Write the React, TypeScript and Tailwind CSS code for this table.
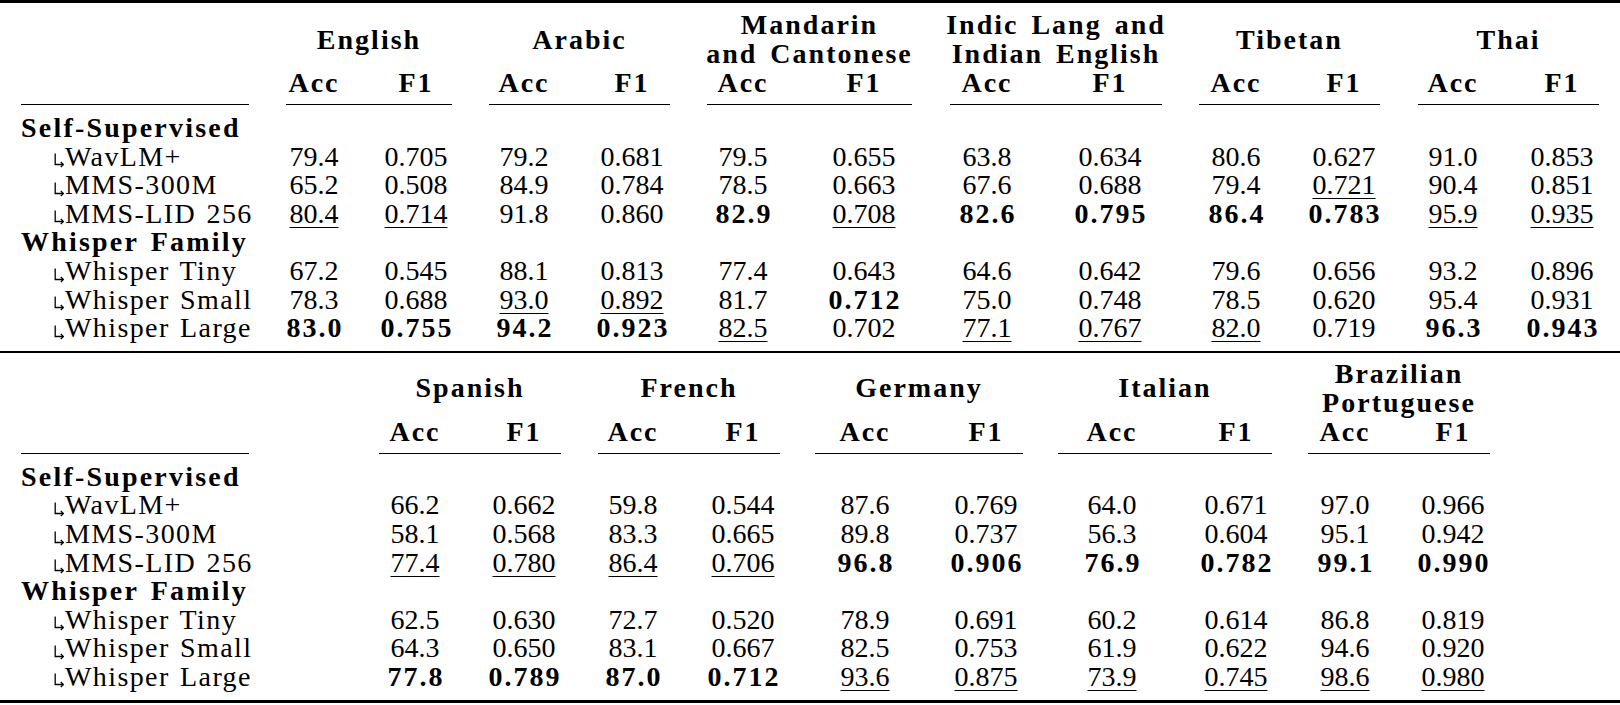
import React from 'react';

type Group = { name: string[]; trim: string };
type Row = { label: string; sub: boolean; vals: string[] };

// column templates: label column, then Acc / F1 pairs
const TOP_COLS = 'grid grid-cols-[263px_102px_102px_114px_102px_120px_122px_124px_122px_130px_86px_132px_86px]';
const BOTTOM_COLS = 'grid grid-cols-[365px_100px_118px_100px_120px_124px_118px_134px_114px_104px_112px]';

const topGroups: Group[] = [
  { name: ['English'], trim: 'ml-[23px] mr-[15px]' },
  { name: ['Arabic'], trim: 'ml-[22px] mr-[13px]' },
  { name: ['Mandarin', 'and Cantonese'], trim: 'ml-[24px] mr-[13px]' },
  { name: ['Indic Lang and', 'Indian English'], trim: 'ml-[25px] mr-[9px]' },
  { name: ['Tibetan'], trim: 'ml-[28px] mr-[7px]' },
  { name: ['Thai'], trim: 'ml-[31px] mr-[6px]' },
];

const bottomGroups: Group[] = [
  { name: ['Spanish'], trim: 'ml-[14px] mr-[22px]' },
  { name: ['French'], trim: 'ml-[15px] mr-[23px]' },
  { name: ['Germany'], trim: 'ml-[12px] mr-[22px]' },
  { name: ['Italian'], trim: 'ml-[13px] mr-[21px]' },
  { name: ['Brazilian', 'Portuguese'], trim: 'ml-[15px] mr-[19px]' },
];

// "*" = best (bold), "_" = second best (underlined)
const topRows: Row[] = [
  { label: 'Self-Supervised', sub: false, vals: [] },
  { label: 'WavLM+', sub: true, vals: ['79.4', '0.705', '79.2', '0.681', '79.5', '0.655', '63.8', '0.634', '80.6', '0.627', '91.0', '0.853'] },
  { label: 'MMS-300M', sub: true, vals: ['65.2', '0.508', '84.9', '0.784', '78.5', '0.663', '67.6', '0.688', '79.4', '_0.721', '90.4', '0.851'] },
  { label: 'MMS-LID 256', sub: true, vals: ['_80.4', '_0.714', '91.8', '0.860', '*82.9', '_0.708', '*82.6', '*0.795', '*86.4', '*0.783', '_95.9', '_0.935'] },
  { label: 'Whisper Family', sub: false, vals: [] },
  { label: 'Whisper Tiny', sub: true, vals: ['67.2', '0.545', '88.1', '0.813', '77.4', '0.643', '64.6', '0.642', '79.6', '0.656', '93.2', '0.896'] },
  { label: 'Whisper Small', sub: true, vals: ['78.3', '0.688', '_93.0', '_0.892', '81.7', '*0.712', '75.0', '0.748', '78.5', '0.620', '95.4', '0.931'] },
  { label: 'Whisper Large', sub: true, vals: ['*83.0', '*0.755', '*94.2', '*0.923', '_82.5', '0.702', '_77.1', '_0.767', '_82.0', '0.719', '*96.3', '*0.943'] },
];

const bottomRows: Row[] = [
  { label: 'Self-Supervised', sub: false, vals: [] },
  { label: 'WavLM+', sub: true, vals: ['66.2', '0.662', '59.8', '0.544', '87.6', '0.769', '64.0', '0.671', '97.0', '0.966'] },
  { label: 'MMS-300M', sub: true, vals: ['58.1', '0.568', '83.3', '0.665', '89.8', '0.737', '56.3', '0.604', '95.1', '0.942'] },
  { label: 'MMS-LID 256', sub: true, vals: ['_77.4', '_0.780', '_86.4', '_0.706', '*96.8', '*0.906', '*76.9', '*0.782', '*99.1', '*0.990'] },
  { label: 'Whisper Family', sub: false, vals: [] },
  { label: 'Whisper Tiny', sub: true, vals: ['62.5', '0.630', '72.7', '0.520', '78.9', '0.691', '60.2', '0.614', '86.8', '0.819'] },
  { label: 'Whisper Small', sub: true, vals: ['64.3', '0.650', '83.1', '0.667', '82.5', '0.753', '61.9', '0.622', '94.6', '0.920'] },
  { label: 'Whisper Large', sub: true, vals: ['*77.8', '*0.789', '*87.0', '*0.712', '_93.6', '_0.875', '_73.9', '_0.745', '_98.6', '_0.980'] },
];

const Value = ({ v }: { v: string }) => {
  const bold = v.startsWith('*');
  const under = v.startsWith('_');
  const text = v.replace(/^[*_]/, '');
  return (
    <div className="flex justify-center">
      <span
        className={
          bold
            ? 'font-bold tracking-[2px] -mr-[2px]'
            : under
              ? 'underline decoration-1 underline-offset-[4px]'
              : ''
        }
      >
        {text}
      </span>
    </div>
  );
};

// small hooked arrow in front of each model name
const SubArrow = () => (
  <svg width="10" height="16" viewBox="0 0 10 16" className="inline-block mr-[1px] -mb-[2px]" fill="none" stroke="black" strokeWidth="1.3">
    <path d="M1.2 1.5 V12.5 H9.2" />
    <path d="M6.8 10 L9.4 12.5 L6.8 15" />
  </svg>
);

const Label = ({ row }: { row: Row }) =>
  row.sub ? (
    <div className="pl-[54px] whitespace-nowrap tracking-[1.4px] [word-spacing:2px]">
      <SubArrow />
      {row.label}
    </div>
  ) : (
    <div className="pl-[21px] whitespace-nowrap font-bold tracking-[2.2px] [word-spacing:3px]">{row.label}</div>
  );

const Table = ({ cols, groups, rows }: { cols: string; groups: Group[]; rows: Row[] }) => (
  <div>
    {/* language headers */}
    <div className={`${cols} h-[58px] leading-[29px] font-bold tracking-[2px] [word-spacing:4px]`}>
      <div />
      {groups.map(g => (
        <div key={g.name[0]} className={`col-span-2 flex flex-col items-center justify-center ${g.trim}`}>
          {g.name.map(line => (
            <div key={line} className="whitespace-nowrap">{line}</div>
          ))}
        </div>
      ))}
    </div>

    {/* Acc / F1 */}
    <div className={`${cols} h-[30px] leading-[30px] font-bold tracking-[2px]`}>
      <div />
      {groups.map(g => (
        <React.Fragment key={g.name[0]}>
          <div className="text-center">Acc</div>
          <div className="text-center">F1</div>
        </React.Fragment>
      ))}
    </div>

    {/* cmidrules */}
    <div className={`${cols} mt-[6px] h-px`}>
      <div className="ml-[21px] w-[228px] bg-black" />
      {groups.map(g => (
        <div key={g.name[0]} className={`col-span-2 bg-black ${g.trim}`} />
      ))}
    </div>

    {/* body */}
    <div className="pt-[9px] pb-[8px]">
      {rows.map(r => (
        <div key={r.label + r.vals.length} className={`${cols} h-[28.6px] leading-[28.6px]`}>
          <Label row={r} />
          {r.vals.map((v, i) => (
            <Value key={i} v={v} />
          ))}
        </div>
      ))}
    </div>
  </div>
);

export default function App() {
  return (
    <div className="w-[1620px] h-[705px] overflow-hidden bg-white text-black font-['Liberation_Serif',serif] text-[28px]">
      <div className="h-[3px] bg-black" />
      <div className="pt-[7px]">
        <Table cols={TOP_COLS} groups={topGroups} rows={topRows} />
      </div>
      <div className="h-[2px] bg-black" />
      <div className="pt-[6px]">
        <Table cols={BOTTOM_COLS} groups={bottomGroups} rows={bottomRows} />
      </div>
      <div className="h-[3px] bg-black" />
    </div>
  );
}
